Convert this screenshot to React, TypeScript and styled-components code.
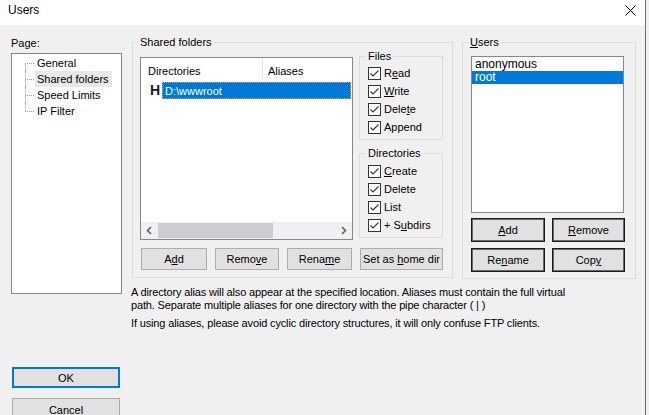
import React from "react";
import styled, { createGlobalStyle } from "styled-components";

const FONT = `"Liberation Sans", Arial, sans-serif`;

const GlobalStyle = createGlobalStyle`
  html, body { margin: 0; padding: 0; background: #f0f0f0; }
  * { box-sizing: border-box; }
`;

const Window = styled.div`
  width: 646px;
  height: 415px;
  background: #f0f0f0;
  border-right: 1px solid #6e6e6e;
  display: flex;
  flex-direction: column;
  overflow: hidden;
  font-family: ${FONT};
  font-size: 11px;
  color: #000;
`;

const TitleBar = styled.div`
  height: 25px;
  flex: none;
  background: #fff;
  display: flex;
  align-items: center;
  justify-content: space-between;
  padding: 0 9px 5px 8px;
`;

const Title = styled.span`
  font-size: 12px;
  line-height: 14px;
`;

const Body = styled.div`
  display: grid;
  grid-template-columns: 112px 321px 174px;
  column-gap: 9px;
  padding: 10px 0 0 11px;
  align-items: start;
`;

const LeftColumn = styled.div`
  display: flex;
  flex-direction: column;
`;

const PageLabel = styled.div`
  line-height: 16px;
`;

const TreeBox = styled.div`
  width: 111px;
  height: 241px;
  margin-top: 2px;
  background: #fff;
  border: 1px solid #828790;
  padding-top: 1px;
`;

const TreeItem = styled.div<{ $first?: boolean; $last?: boolean }>`
  position: relative;
  height: 16px;
  padding-left: 23px;
  display: flex;
  align-items: center;
  &::before {
    content: "";
    position: absolute;
    left: 13px;
    top: 8px;
    width: 9px;
    border-top: 1px dotted #a0a0a0;
  }
  &::after {
    content: "";
    position: absolute;
    left: 13px;
    top: ${(p) => (p.$first ? "8px" : "0")};
    bottom: ${(p) => (p.$last ? "8px" : "0")};
    border-left: 1px dotted #a0a0a0;
  }
`;

const TreeLabel = styled.span<{ $selected?: boolean }>`
  line-height: 16px;
  padding: 0 3px 0 2px;
  background: ${(p) => (p.$selected ? "#e8e8e8" : "transparent")};
`;

const Button = styled.button<{ $variant?: "normal" | "dark" | "default"; $w: number; $h?: number }>`
  width: ${(p) => p.$w}px;
  height: ${(p) => p.$h ?? 22}px;
  flex: none;
  margin: 0;
  padding: 0;
  font-family: ${FONT};
  font-size: 11px;
  color: #000;
  background: #e1e1e1;
  border: ${(p) =>
    p.$variant === "default"
      ? "2px solid #0078d7"
      : p.$variant === "dark"
      ? "1px solid #1a1a1a"
      : "1px solid #adadad"};
  box-shadow: ${(p) => (p.$variant === "dark" ? "inset 0 0 0 1px #6a6a6a" : "none")};
  display: flex;
  align-items: center;
  justify-content: center;
`;

const ButtonLabel = styled.span`
  white-space: pre;
`;

const OkButton = styled(Button)`
  margin: 73px 0 0 1px;
`;

const CancelButton = styled(Button)`
  margin: 10px 0 0 1px;
`;

const MiddleColumn = styled.div`
  display: flex;
  flex-direction: column;
`;

const GroupBox = styled.fieldset<{ $pad: string }>`
  margin: 0;
  min-width: 0;
  border: 1px solid #dcdcdc;
  padding: ${(p) => p.$pad};
`;

const Legend = styled.legend<{ $ml?: number }>`
  padding: 0 2px;
  margin-left: ${(p) => p.$ml ?? -2}px;
  line-height: 14px;
  font-size: 11px;
`;

const SharedGrid = styled.div`
  display: grid;
  grid-template-columns: 213px 84px;
  column-gap: 6px;
  row-gap: 8px;
  align-items: start;
`;

const DirList = styled.div`
  margin-top: 8px;
  height: 183px;
  background: #fff;
  border: 1px solid #828790;
  display: flex;
  flex-direction: column;
`;

const ListHeader = styled.div`
  height: 21px;
  display: flex;
  flex: none;
`;

const HeaderCell = styled.div<{ $w?: number; $sep?: boolean }>`
  ${(p) => (p.$w ? `width: ${p.$w}px;` : "flex: 1;")}
  padding: 4px 0 0 ${(p) => (p.$sep ? 7 : 5)}px;
  display: flex;
  align-items: center;
  border-right: ${(p) => (p.$sep ? "1px solid #e5e5e5" : "none")};
`;

const Rows = styled.div`
  flex: 1;
  padding-top: 3px;
`;

const DirRow = styled.div`
  height: 17px;
  display: flex;
  align-items: stretch;
`;

const HomeMark = styled.span`
  width: 21px;
  flex: none;
  padding-left: 9px;
  font-weight: bold;
  font-size: 14px;
  line-height: 17px;
  color: #0d1b2a;
`;

const DirSelection = styled.div`
  flex: 1;
  margin-right: 1px;
  background: #0078d7;
  color: #fff;
  border: 1px dotted #f5a04a;
  padding-left: 2px;
  display: flex;
  align-items: center;
`;

const HScroll = styled.div`
  height: 17px;
  flex: none;
  background: #f0f0f0;
  display: flex;
  align-items: center;
`;

const ScrollArrow = styled.div`
  width: 17px;
  height: 17px;
  flex: none;
  display: flex;
  align-items: center;
  justify-content: center;
`;

const ScrollThumb = styled.div`
  width: 115px;
  height: 15px;
  background: #cdcdcd;
`;

const ScrollTrack = styled.div`
  flex: 1;
`;

const PermColumn = styled.div`
  display: flex;
  flex-direction: column;
  gap: 6px;
`;

const CheckRow = styled.div`
  height: 18px;
  display: flex;
  align-items: center;
  gap: 3px;
`;

const ButtonRow = styled.div`
  grid-column: 1 / -1;
  display: flex;
  gap: 8px;
  padding-left: 1px;
`;

const Notes = styled.div`
  margin: 8px 0 0 -1px;
  font-size: 11px;
  letter-spacing: -0.15px;
  line-height: 13px;
  white-space: nowrap;
`;

const NoteParagraph = styled.p`
  margin: 0 0 5px 0;
`;

const UsersList = styled.div`
  margin-top: 7px;
  width: 153px;
  height: 157px;
  background: #fff;
  border: 1px solid #828790;
  padding-top: 1px;
`;

const UserItem = styled.div<{ $selected?: boolean }>`
  height: 13px;
  line-height: 13px;
  font-size: 12px;
  padding-left: 3px;
  background: ${(p) => (p.$selected ? "#0078d7" : "transparent")};
  color: ${(p) => (p.$selected ? "#fff" : "#000")};
`;

const UserButtons = styled.div`
  margin-top: 5px;
  display: grid;
  grid-template-columns: 74px 73px;
  column-gap: 7px;
  row-gap: 6px;
`;

const U = styled.span`
  text-decoration: underline;
  text-underline-offset: 1px;
`;

const CheckBox: React.FC<{ children: React.ReactNode }> = ({ children }) => (
  <CheckRow>
    <svg width="13" height="13" viewBox="0 0 13 13">
      <rect x="0.5" y="0.5" width="12" height="12" fill="#fff" stroke="#333" />
      <path d="M2.5 6.5 L5 9 L10.5 3.5" fill="none" stroke="#333" strokeWidth="1.1" />
    </svg>
    <ButtonLabel>{children}</ButtonLabel>
  </CheckRow>
);

const CloseIcon = () => (
  <svg width="11" height="11" viewBox="0 0 11 11">
    <path d="M0.5 0.5 L10.5 10.5 M10.5 0.5 L0.5 10.5" stroke="#000" strokeWidth="1" />
  </svg>
);

const Chevron: React.FC<{ dir: "left" | "right" }> = ({ dir }) => (
  <svg width="17" height="17" viewBox="0 0 17 17">
    <path
      d={dir === "left" ? "M10 5 L6.5 8.5 L10 12" : "M7 5 L10.5 8.5 L7 12"}
      fill="none"
      stroke="#606060"
      strokeWidth="1.6"
    />
  </svg>
);

export default function App() {
  return (
    <>
      <GlobalStyle />
      <Window>
        <TitleBar>
          <Title>Users</Title>
          <CloseIcon />
        </TitleBar>
        <Body>
          <LeftColumn>
            <PageLabel>Page:</PageLabel>
            <TreeBox>
              <TreeItem $first>
                <TreeLabel>General</TreeLabel>
              </TreeItem>
              <TreeItem>
                <TreeLabel $selected>Shared folders</TreeLabel>
              </TreeItem>
              <TreeItem>
                <TreeLabel>Speed Limits</TreeLabel>
              </TreeItem>
              <TreeItem $last>
                <TreeLabel>IP Filter</TreeLabel>
              </TreeItem>
            </TreeBox>
            <OkButton $variant="default" $w={108} $h={21}>
              <ButtonLabel>OK</ButtonLabel>
            </OkButton>
            <CancelButton $w={108} $h={23}>
              <ButtonLabel>Cancel</ButtonLabel>
            </CancelButton>
          </LeftColumn>

          <MiddleColumn>
            <GroupBox $pad="0 9px 7px 7px">
              <Legend>Shared folders</Legend>
              <SharedGrid>
                <DirList>
                  <ListHeader>
                    <HeaderCell $w={122} $sep>
                      Directories
                    </HeaderCell>
                    <HeaderCell>Aliases</HeaderCell>
                  </ListHeader>
                  <Rows>
                    <DirRow>
                      <HomeMark>H</HomeMark>
                      <DirSelection>D:\wwwroot</DirSelection>
                    </DirRow>
                  </Rows>
                  <HScroll>
                    <ScrollArrow>
                      <Chevron dir="left" />
                    </ScrollArrow>
                    <ScrollThumb />
                    <ScrollTrack />
                    <ScrollArrow>
                      <Chevron dir="right" />
                    </ScrollArrow>
                  </HScroll>
                </DirList>
                <PermColumn>
                  <GroupBox $pad="1px 0 3px 8px">
                    <Legend>Files</Legend>
                    <CheckBox>
                      R<U>e</U>ad
                    </CheckBox>
                    <CheckBox>
                      <U>W</U>rite
                    </CheckBox>
                    <CheckBox>
                      Dele<U>t</U>e
                    </CheckBox>
                    <CheckBox>Append</CheckBox>
                  </GroupBox>
                  <GroupBox $pad="2px 0 3px 8px">
                    <Legend>Directories</Legend>
                    <CheckBox>
                      <U>C</U>reate
                    </CheckBox>
                    <CheckBox>Delete</CheckBox>
                    <CheckBox>List</CheckBox>
                    <CheckBox>
                      {"+ S"}
                      <U>u</U>bdirs
                    </CheckBox>
                  </GroupBox>
                </PermColumn>
                <ButtonRow>
                  <Button $w={66}>
                    <ButtonLabel>
                      A<U>d</U>d
                    </ButtonLabel>
                  </Button>
                  <Button $w={64}>
                    <ButtonLabel>
                      Remo<U>v</U>e
                    </ButtonLabel>
                  </Button>
                  <Button $w={65}>
                    <ButtonLabel>
                      Rena<U>m</U>e
                    </ButtonLabel>
                  </Button>
                  <Button $w={83}>
                    <ButtonLabel>
                      {"Set as "}
                      <U>h</U>
                      {"ome dir"}
                    </ButtonLabel>
                  </Button>
                </ButtonRow>
              </SharedGrid>
            </GroupBox>
            <Notes>
              <NoteParagraph>
                A directory alias will also appear at the specified location. Aliases must contain the full virtual
                <br />
                path. Separate multiple aliases for one directory with the pipe character ( | )
              </NoteParagraph>
              <NoteParagraph>
                If using aliases, please avoid cyclic directory structures, it will only confuse FTP clients.
              </NoteParagraph>
            </Notes>
          </MiddleColumn>

          <GroupBox $pad="0 8px 6px 8px">
            <Legend $ml={-3}>
              <U>U</U>sers
            </Legend>
            <UsersList>
              <UserItem>anonymous</UserItem>
              <UserItem $selected>root</UserItem>
            </UsersList>
            <UserButtons>
              <Button $variant="dark" $w={74} $h={24}>
                <ButtonLabel>
                  <U>A</U>dd
                </ButtonLabel>
              </Button>
              <Button $variant="dark" $w={73} $h={24}>
                <ButtonLabel>
                  <U>R</U>emove
                </ButtonLabel>
              </Button>
              <Button $variant="dark" $w={74} $h={24}>
                <ButtonLabel>
                  Re<U>n</U>ame
                </ButtonLabel>
              </Button>
              <Button $variant="dark" $w={73} $h={24}>
                <ButtonLabel>
                  Cop<U>y</U>
                </ButtonLabel>
              </Button>
            </UserButtons>
          </GroupBox>
        </Body>
      </Window>
    </>
  );
}
